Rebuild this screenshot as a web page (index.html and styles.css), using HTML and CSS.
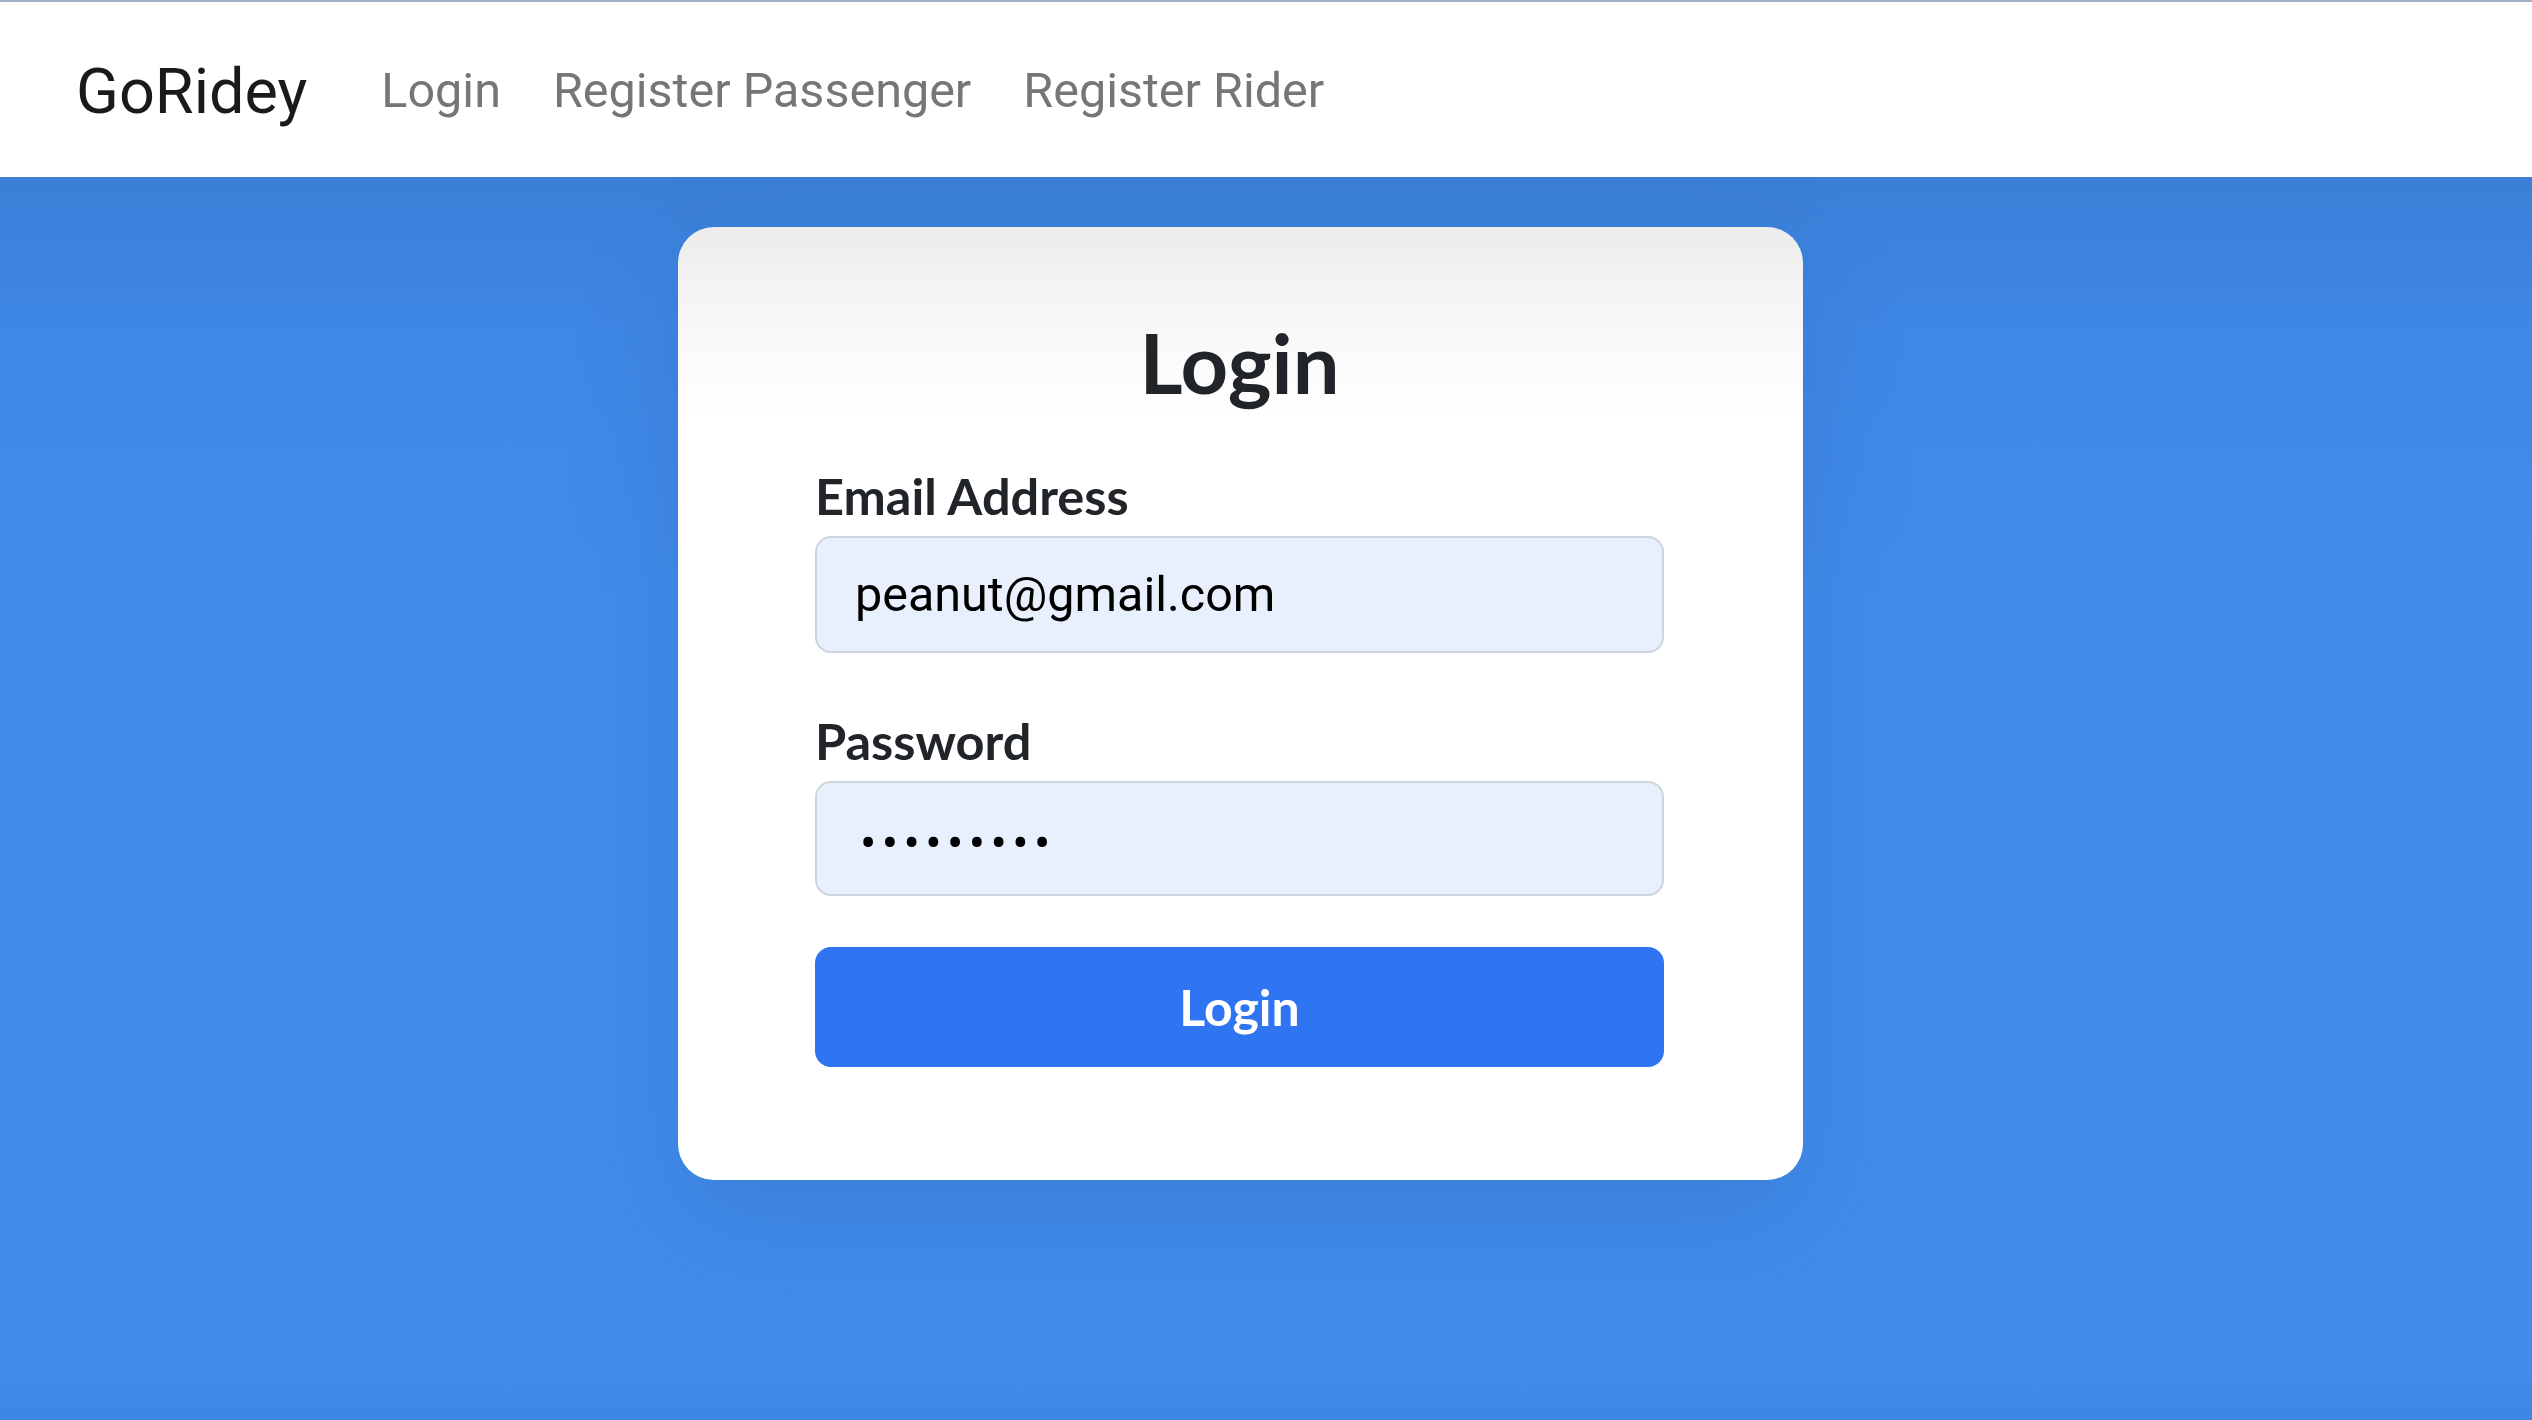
FILE: index.html
```html
<!DOCTYPE html>
<html lang="en">
<head>
<meta charset="utf-8">
<title>GoRidey - Login</title>
<link rel="stylesheet" href="styles.css">
</head>
<body>
<nav class="navbar">
  <a class="brand" href="#">GoRidey</a>
  <ul class="nav-links">
    <li><a href="#">Login</a></li>
    <li><a href="#">Register Passenger</a></li>
    <li><a href="#">Register Rider</a></li>
  </ul>
</nav>
<main class="hero">
  <div class="card">
    <h1 class="card-title">Login</h1>
    <form class="login-form">
      <label class="field-label" for="email">Email Address</label>
      <input class="field-input" id="email" type="email" value="peanut@gmail.com">
      <label class="field-label" for="password">Password</label>
      <input class="field-input password" id="password" type="password" value="123456789">
      <button class="submit-btn" type="button">Login</button>
    </form>
  </div>
</main>
</body>
</html>
```
FILE: styles.css
```css
* { box-sizing: border-box; }
html, body { margin: 0; padding: 0; }
body {
  font-family: Roboto, "Liberation Sans", sans-serif;
  background: #418dec;
  min-height: 1420px;
  display: flex;
  flex-direction: column;
}
.navbar {
  height: 177px;
  border-top: 2px solid #a3b1c6;
  background: #fff;
  display: flex;
  align-items: center;
  padding: 3px 0 0 76px;
  position: relative;
  z-index: 2;
}
.brand {
  font-family: Roboto, sans-serif;
  font-size: 63px;
  color: #1a1a1a;
  text-decoration: none;
  margin-right: 74px;
  line-height: 1;
}
.nav-links {
  list-style: none;
  margin: 0;
  padding: 0;
  display: flex;
  gap: 52px;
}
.nav-links a {
  font-family: Roboto, sans-serif;
  font-size: 48.5px;
  color: #767676;
  text-decoration: none;
  line-height: 1;
}
.hero {
  flex: 1;
  display: flex;
  justify-content: center;
  align-items: flex-start;
  padding: 50px 51px 0 0;
  background: linear-gradient(to bottom, #3b7fd7 0, #3f88e6 160px, #418dec 420px, #418dec 1190px, #3e86e3 1243px);
}
.card {
  width: 1125px;
  height: 953px;
  border-radius: 36px;
  background: linear-gradient(to bottom, #ececed 0, #f7f7f7 90px, #ffffff 190px);
  box-shadow: 0 40px 110px rgba(30, 60, 120, 0.18);
  padding: 86px 139px 112px 137px;
}
.card-title {
  margin: 0;
  font-family: Lato, sans-serif;
  font-weight: 700;
  font-size: 83px;
  line-height: 1.2;
  color: #212529;
  text-align: center;
}
.login-form {
  display: flex;
  flex-direction: column;
  padding-top: 53px;
}
.field-label {
  font-family: Lato, sans-serif;
  font-weight: 700;
  font-size: 50.5px;
  line-height: 60px;
  color: #212529;
  margin-bottom: 10px;
}
.field-input {
  height: 117px;
  width: 100%;
  border: 2px solid #cfd4da;
  border-radius: 16px;
  background: #e8f0fe;
  padding: 0 30px 0 38px;
  font-family: Roboto, sans-serif;
  font-size: 48.5px;
  color: #000;
  margin: 0 0 58px 0;
  outline: none;
}
.field-input.password {
  height: 115px;
  margin-bottom: 51px;
  padding: 10px 30px 0 43px;
  letter-spacing: 5.4px;
}
.submit-btn {
  height: 120px;
  width: 100%;
  border: none;
  border-radius: 16px;
  background: #2f74f1;
  color: #fff;
  font-family: Lato, sans-serif;
  font-weight: 700;
  font-size: 50px;
  cursor: pointer;
}
```
